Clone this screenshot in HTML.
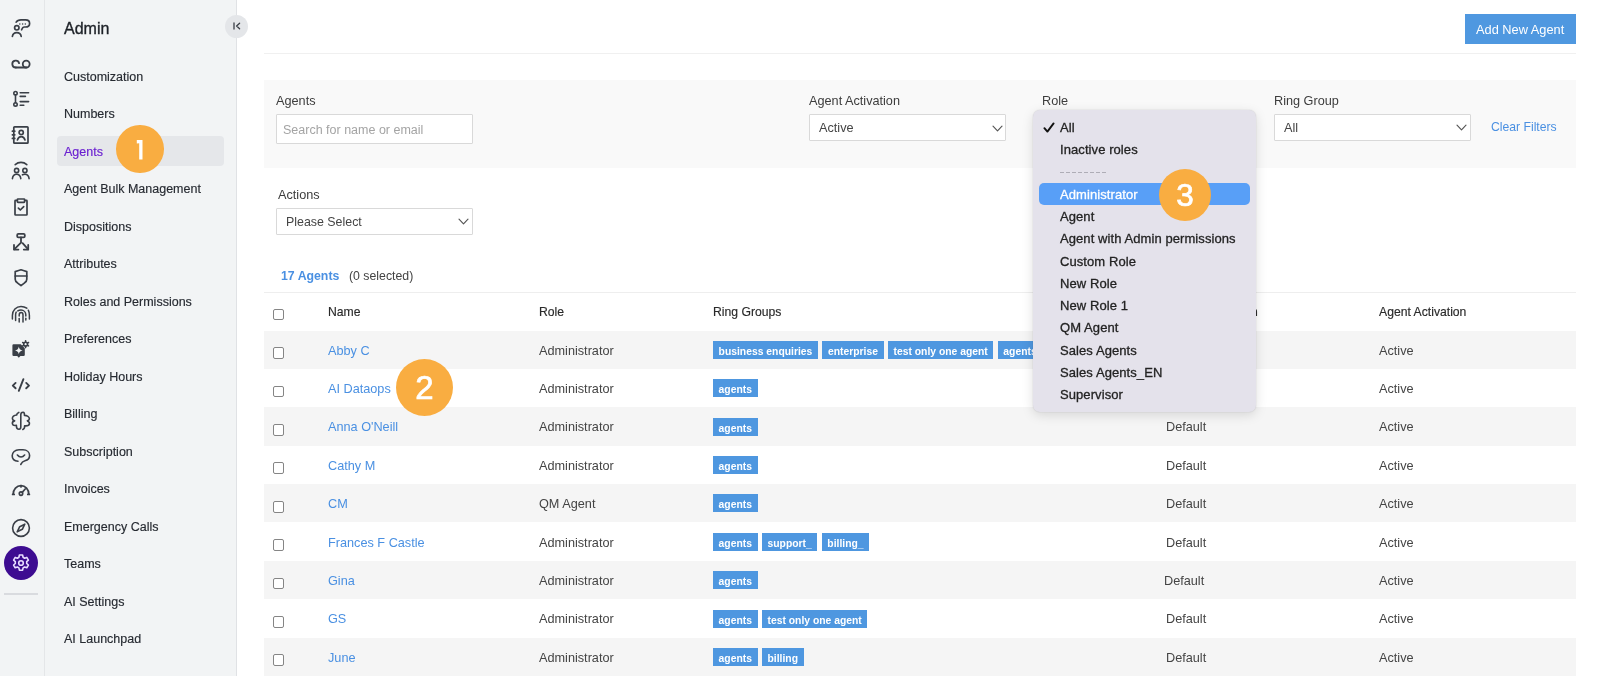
<!DOCTYPE html>
<html><head><meta charset="utf-8"><style>
*{box-sizing:border-box;margin:0;padding:0}
html,body{width:1600px;height:676px;overflow:hidden;background:#fff;font-family:"Liberation Sans",sans-serif}
.t{position:absolute;white-space:nowrap;will-change:transform}
.ic{position:absolute;overflow:visible}
#rail{position:absolute;left:0;top:0;width:45px;height:676px;background:#f2f4f5;border-right:1px solid #e4e6e8}
#side{position:absolute;left:45px;top:0;width:192px;height:676px;background:#f2f4f5;border-right:1px solid #e0e2e5}
#gearc{position:absolute;left:4px;top:546px;width:34.2px;height:34.2px;border-radius:50%;background:#3d0c91}
#railline{position:absolute;left:4px;top:593px;width:34px;height:2px;background:#d9dbdf}
#hl{position:absolute;left:57px;top:136px;width:167px;height:30px;border-radius:4px;background:#e5e7ea}
#coll{position:absolute;left:224.5px;top:14.5px;width:23px;height:23px;border-radius:50%;background:#e4e6e9}
#hdrline{position:absolute;left:264px;top:53px;width:1312px;height:1px;background:#f0f0f0}
#btn{position:absolute;left:1465px;top:14px;width:111px;height:30px;background:#4f98e0}
#panel{position:absolute;left:264px;top:80.4px;width:1312px;height:87.6px;background:#f9f9f9}
.inp{position:absolute;background:#fff;border:1px solid #d9d9d9;border-radius:1px}
#tline{position:absolute;left:264px;top:292px;width:1312px;height:1px;background:#eeeeee}
.row{position:absolute;left:264px;width:1312px;height:38.4px;background:#f5f5f5}
.cb{position:absolute;left:272.7px;width:11.7px;height:11.8px;border:1px solid #858585;border-radius:2px;background:#fff}
.tags{position:absolute;left:713px;height:17.8px;white-space:nowrap;font-size:0;will-change:transform}
.tags span{display:inline-block;height:17.8px;line-height:21px;overflow:hidden;padding:0 5.6px;margin-right:4.4px;background:#4e97e0;color:#fff;font-weight:700;font-size:10.35px;vertical-align:top}
#dd{position:absolute;left:1033px;top:110.3px;width:222.5px;height:302px;border-radius:7px;background:#e4e2eb;box-shadow:0 3px 12px rgba(0,0,0,0.13),0 0 1.5px rgba(0,0,0,0.18)}
#ddhl{position:absolute;left:1039px;top:182.9px;width:211px;height:22.6px;border-radius:5px;background:#589ff7}
#dashes{position:absolute;left:1060px;top:171.5px;width:46px;height:1.2px;background:repeating-linear-gradient(90deg,#aeadb6 0 4px,transparent 4px 6px)}
.num{position:absolute;border-radius:50%;background:#f9ad41;color:#fff;text-align:center;font-family:"Liberation Sans",sans-serif;-webkit-text-stroke:0.7px #fff;will-change:transform}
</style></head><body>
<div id="rail"></div>
<div id="side"></div>
<div id="gearc"></div>
<div id="railline"></div>
<svg class="ic" style="left:11.0px;top:17.5px" width="20" height="20" viewBox="0 0 20 20" fill="none" stroke="#3a3f47" stroke-width="1.7" stroke-linecap="round" stroke-linejoin="round"><circle cx="5.8" cy="9.8" r="2.2"/><path d="M1.4 18.4C1.8 15.8 3.4 14.6 5.8 14.6S9.8 15.8 10.2 18.4"/><path d="M5.2 4.2C6 2.8 7.6 1.9 10 1.9H14.6C17 1.9 18.6 3.4 18.6 5.4 18.6 7.6 16.8 9 14.4 9H13.4C12.4 9 11.4 9.6 10.6 11.8"/><circle cx="8.8" cy="5.9" r="0.75" fill="#3a3f47" stroke="none"/><circle cx="11.6" cy="5.9" r="0.75" fill="#3a3f47" stroke="none"/><circle cx="14.3" cy="5.9" r="0.75" fill="#3a3f47" stroke="none"/></svg>
<svg class="ic" style="left:11.0px;top:58.0px" width="20" height="12" viewBox="0 0 20 12" fill="none" stroke="#3a3f47" stroke-width="1.8" stroke-linecap="round" stroke-linejoin="round"><path d="M4.9 9.5A3.45 3.45 0 1 1 8.1 5.2"/><circle cx="15.2" cy="6.05" r="3.45"/><path d="M4.9 9.5h10.3"/></svg>
<svg class="ic" style="left:12.0px;top:90.0px" width="18" height="18" viewBox="0 0 18 18" fill="none" stroke="#3a3f47" stroke-width="1.6" stroke-linecap="round" stroke-linejoin="round"><circle cx="3.5" cy="3.2" r="1.7"/><circle cx="3.5" cy="14.4" r="1.7"/><path d="M3.5 4.9v7.8"/><path d="M8.2 2.8h8.4M8.2 6.4h5.2M8.2 11.6h8.4M8.2 15.2h3.6"/></svg>
<svg class="ic" style="left:11.0px;top:125.0px" width="20" height="20" viewBox="0 0 20 20" fill="none" stroke="#3a3f47" stroke-width="1.7" stroke-linecap="round" stroke-linejoin="round"><rect x="2.8" y="1.8" width="14.2" height="16.4" rx="0.8"/><circle cx="10.2" cy="7.4" r="2.1"/><path d="M6.4 15c0.7-2.2 2.1-3.3 3.8-3.3s3.1 1.1 3.8 3.3"/><path d="M1.4 6.2h2.4M1.4 9.8h2.4M1.4 13.4h2.4"/></svg>
<svg class="ic" style="left:11.0px;top:161.0px" width="20" height="20" viewBox="0 0 20 20" fill="none" stroke="#3a3f47" stroke-width="1.6" stroke-linecap="round" stroke-linejoin="round"><circle cx="5.6" cy="9.5" r="2.1"/><circle cx="13.9" cy="9.5" r="2.1"/><path d="M1.4 17.6c0.4-2.8 2.1-4.3 4.2-4.3s3.8 1.5 4.2 4.3"/><path d="M11.4 13.8c0.7-0.3 1.5-0.5 2.5-0.5 2.1 0 3.8 1.5 4.2 4.3"/><path d="M4.2 3.6c1.7-1.5 3.6-2.2 5.8-2.2s4.1 0.7 5.8 2.2"/></svg>
<svg class="ic" style="left:11.0px;top:196.5px" width="20" height="20" viewBox="0 0 20 20" fill="none" stroke="#3a3f47" stroke-width="1.7" stroke-linecap="round" stroke-linejoin="round"><rect x="4" y="3.4" width="12" height="14.6" rx="0.6"/><rect x="6.4" y="2" width="7.2" height="3.4" rx="0.6" fill="#f2f4f5"/><path d="M7.4 11.2l1.9 1.8 3.4-3.4"/></svg>
<svg class="ic" style="left:11.0px;top:232.0px" width="20" height="20" viewBox="0 0 20 20" fill="none" stroke="#3a3f47" stroke-width="1.8" stroke-linecap="round" stroke-linejoin="round"><rect x="6.2" y="1.8" width="7.6" height="3.6" rx="1.2"/><path d="M10 5.4v5.2L3.2 17.4M11.6 11.2l5.6 6.2"/><path d="M3 13v4.6h4.4M17.2 13v4.6h-4.4"/></svg>
<svg class="ic" style="left:11.0px;top:268.0px" width="20" height="20" viewBox="0 0 20 20" fill="none" stroke="#3a3f47" stroke-width="1.7" stroke-linecap="round" stroke-linejoin="round"><path d="M4.2 3.6c2-0.6 4-1.2 5.8-1.8 1.8 0.6 3.8 1.2 5.8 1.8v7.6c0 1.4-0.8 2.6-2.2 3.6L10 17.6l-3.6-2.8c-1.4-1-2.2-2.2-2.2-3.6z"/><path d="M4.2 8h11.6"/></svg>
<svg class="ic" style="left:11.0px;top:303.5px" width="20" height="20" viewBox="0 0 20 20" fill="none" stroke="#3a3f47" stroke-width="1.5" stroke-linecap="round" stroke-linejoin="round"><path d="M1.4 15V11.4C1.4 6.4 5.2 2.4 10 2.4 12.4 2.4 14.4 3.2 15.8 4.2"/><path d="M17.3 6.2C18 7.6 18.4 9.4 18.4 11.4V15"/><path d="M4.6 16.6V10.8C4.6 9.8 4.8 8.9 5.2 8.1"/><path d="M6.8 6.9C7.7 6.3 8.8 6 10 6 12.8 6 14.8 8.2 14.8 10.8V12"/><path d="M14.8 14.2V16"/><path d="M8.2 12V11C8.2 9.6 9 8.6 10.2 8.6S12 9.6 12 11V18"/><path d="M8.2 14.6V18"/></svg>
<svg class="ic" style="left:11.0px;top:339.0px" width="20" height="20" viewBox="0 0 20 20" fill="none" stroke="#3a3f47" stroke-width="1.2" stroke-linecap="round" stroke-linejoin="round"><path d="M2.6 5.2H9.8L13.8 9.2V15.8a1.2 1.2 0 0 1-1.2 1.2H9.4L7.8 18.8 6.2 17H2.6a1.2 1.2 0 0 1-1.2-1.2V6.4a1.2 1.2 0 0 1 1.2-1.2z" fill="#3a3f47" stroke="none"/><path d="M7.8 7.6Q8.2 11 11.6 11.4 8.2 11.8 7.8 15.2 7.4 11.8 4 11.4 7.4 11 7.8 7.6z" fill="#f2f4f5" stroke="none"/><circle cx="14.6" cy="5.2" r="1.9" stroke-width="1.5"/><path d="M14.6 1.8v1.2M14.6 7.4v1.2M11.7 3.5l1 0.6M16.5 6.3l1 0.6M11.7 6.9l1-0.6M16.5 4.1l1-0.6" stroke-width="1.6"/></svg>
<svg class="ic" style="left:11.0px;top:376.5px" width="20" height="16" viewBox="0 0 20 16" fill="none" stroke="#3a3f47" stroke-width="1.9" stroke-linecap="round" stroke-linejoin="round"><path d="M4.6 5.9L1.8 8.6l2.8 2.7M15.2 5.9l2.8 2.7-2.8 2.7M12.4 2.2L7.8 13.8"/></svg>
<svg class="ic" style="left:11.0px;top:411.0px" width="20" height="20" viewBox="0 0 20 20" fill="none" stroke="#3a3f47" stroke-width="1.6" stroke-linecap="round" stroke-linejoin="round"><path d="M7.8 1.4C6.6 1.8 5.8 2.8 5.6 4 3 4.2 1.2 5.8 1.4 7.6 1.5 8.8 2.4 9.6 3.6 9.9 2 10.3 1.2 11.6 1.4 12.8 1.7 14.2 3.4 14.8 5.4 14.4 5.4 16.6 6.6 18.2 8 18.2 9 18.2 9.8 17.4 9.8 16V3.8C9.8 2.2 10.8 1.2 12 1.2 13.2 1.2 13.6 2.6 13.4 4.4 16 4.4 18.4 5.8 18.4 7.8 18.4 8.8 17.6 9.6 16.4 9.9 17.8 10.4 18.6 11.6 18.4 12.8 18.2 14.4 16.2 15 13.6 14.8 13.8 16.4 13.2 17.8 11.8 18.4"/></svg>
<svg class="ic" style="left:11.0px;top:448.0px" width="20" height="18" viewBox="0 0 20 18" fill="none" stroke="#3a3f47" stroke-width="1.6" stroke-linecap="round" stroke-linejoin="round"><path d="M7 13.2C3.6 13 1.2 11 1.2 7.8 1.2 4.4 4 1.8 8 1.8H12C16 1.8 18.6 4.4 18.6 7.6 18.6 10.4 16.8 12.2 14 12.8 12.2 13.2 10.6 14.6 9.8 16.4"/><path d="M6.4 7C8.4 9.6 11.6 9.6 13.6 7"/></svg>
<svg class="ic" style="left:11.0px;top:480.8px" width="20" height="16" viewBox="0 0 20 16" fill="none" stroke="#3a3f47" stroke-width="1.7" stroke-linecap="round" stroke-linejoin="round"><path d="M2.2 13.2c0-4.8 3.4-8.6 7.8-8.6s7.8 3.8 7.8 8.6"/><path d="M1.6 13.4h1.6M16.8 13.4h1.6M10 4.6v1.4"/><circle cx="10" cy="12.6" r="1.7"/><path d="M11.2 11.4l3-3.4"/></svg>
<svg class="ic" style="left:11.0px;top:518.0px" width="20" height="20" viewBox="0 0 20 20" fill="none" stroke="#3a3f47" stroke-width="1.6" stroke-linecap="round" stroke-linejoin="round"><circle cx="10" cy="10" r="8.4"/><path d="M13.8 6.2L11.3 11.3 6.2 13.8 8.7 8.7z" stroke-width="1.6"/></svg>
<svg class="ic" style="left:11px;top:553.2px" width="20" height="20" viewBox="0 0 20 20" fill="none" stroke="#e8ddff" stroke-width="1.6" stroke-linejoin="round"><path d="M8.4 2h3.2l0.5 2.3 1.5 0.9 2.2-0.8 1.6 2.8-1.7 1.5v1.8l1.7 1.5-1.6 2.8-2.2-0.8-1.5 0.9-0.5 2.3H8.4l-0.5-2.3-1.5-0.9-2.2 0.8-1.6-2.8 1.7-1.5V8.7L2.6 7.2l1.6-2.8 2.2 0.8 1.5-0.9z"/><circle cx="10" cy="10" r="2.3"/></svg>

<div id="hl"></div>
<div class="t" style="left:64px;top:20.86px;font-size:16px;line-height:16px;color:#1d2127;font-weight:400;-webkit-text-stroke:0.35px #1d2127;">Admin</div>

<div class="t" style="left:64px;top:70.72px;font-size:12.5px;line-height:12.5px;color:#262a31;font-weight:400;-webkit-text-stroke:0.15px #262a31;">Customization</div>
<div class="t" style="left:64px;top:108.22px;font-size:12.5px;line-height:12.5px;color:#262a31;font-weight:400;-webkit-text-stroke:0.15px #262a31;">Numbers</div>
<div class="t" style="left:64px;top:145.72px;font-size:12.5px;line-height:12.5px;color:#6a1fd0;font-weight:400;-webkit-text-stroke:0.15px #6a1fd0;">Agents</div>
<div class="t" style="left:64px;top:183.22px;font-size:12.5px;line-height:12.5px;color:#262a31;font-weight:400;-webkit-text-stroke:0.15px #262a31;">Agent Bulk Management</div>
<div class="t" style="left:64px;top:220.72px;font-size:12.5px;line-height:12.5px;color:#262a31;font-weight:400;-webkit-text-stroke:0.15px #262a31;">Dispositions</div>
<div class="t" style="left:64px;top:258.22px;font-size:12.5px;line-height:12.5px;color:#262a31;font-weight:400;-webkit-text-stroke:0.15px #262a31;">Attributes</div>
<div class="t" style="left:64px;top:295.72px;font-size:12.5px;line-height:12.5px;color:#262a31;font-weight:400;-webkit-text-stroke:0.15px #262a31;">Roles and Permissions</div>
<div class="t" style="left:64px;top:333.22px;font-size:12.5px;line-height:12.5px;color:#262a31;font-weight:400;-webkit-text-stroke:0.15px #262a31;">Preferences</div>
<div class="t" style="left:64px;top:370.72px;font-size:12.5px;line-height:12.5px;color:#262a31;font-weight:400;-webkit-text-stroke:0.15px #262a31;">Holiday Hours</div>
<div class="t" style="left:64px;top:408.22px;font-size:12.5px;line-height:12.5px;color:#262a31;font-weight:400;-webkit-text-stroke:0.15px #262a31;">Billing</div>
<div class="t" style="left:64px;top:445.72px;font-size:12.5px;line-height:12.5px;color:#262a31;font-weight:400;-webkit-text-stroke:0.15px #262a31;">Subscription</div>
<div class="t" style="left:64px;top:483.22px;font-size:12.5px;line-height:12.5px;color:#262a31;font-weight:400;-webkit-text-stroke:0.15px #262a31;">Invoices</div>
<div class="t" style="left:64px;top:520.72px;font-size:12.5px;line-height:12.5px;color:#262a31;font-weight:400;-webkit-text-stroke:0.15px #262a31;">Emergency Calls</div>
<div class="t" style="left:64px;top:558.22px;font-size:12.5px;line-height:12.5px;color:#262a31;font-weight:400;-webkit-text-stroke:0.15px #262a31;">Teams</div>
<div class="t" style="left:64px;top:595.72px;font-size:12.5px;line-height:12.5px;color:#262a31;font-weight:400;-webkit-text-stroke:0.15px #262a31;">AI Settings</div>
<div class="t" style="left:64px;top:633.22px;font-size:12.5px;line-height:12.5px;color:#262a31;font-weight:400;-webkit-text-stroke:0.15px #262a31;">AI Launchpad</div>

<div id="coll"></div>
<svg class="ic" style="left:231.5px;top:21px" width="10" height="10" viewBox="0 0 10 10" fill="none" stroke="#3a3f47" stroke-width="1.3" stroke-linecap="round" stroke-linejoin="round"><path d="M2 2v6M7.6 2.2L4.6 5l3 2.8"/></svg>
<div id="hdrline"></div>
<div id="btn"></div>
<div class="t" style="left:1476px;top:24.16px;font-size:12.8px;line-height:12.8px;color:#fff;font-weight:400;">Add New Agent</div>

<div id="panel"></div>
<div class="inp" style="left:276px;top:114px;width:197.4px;height:29.6px"></div>
<div class="inp" style="left:809px;top:114px;width:197px;height:26.5px"></div>
<div class="inp" style="left:1274px;top:114px;width:197px;height:26.5px"></div>
<div class="inp" style="left:276px;top:207.5px;width:197.4px;height:27px"></div>
<svg class="ic" style="left:991.5px;top:124.5px" width="11" height="7" viewBox="0 0 11 7" fill="none" stroke="#555" stroke-width="1.15" stroke-linecap="round" stroke-linejoin="round"><path d="M1 1.2l4.5 4.6 4.5-4.6"/></svg>
<svg class="ic" style="left:1456px;top:124px" width="11" height="7" viewBox="0 0 11 7" fill="none" stroke="#555" stroke-width="1.15" stroke-linecap="round" stroke-linejoin="round"><path d="M1 1.2l4.5 4.6 4.5-4.6"/></svg>
<svg class="ic" style="left:457.5px;top:217.5px" width="11" height="7" viewBox="0 0 11 7" fill="none" stroke="#555" stroke-width="1.15" stroke-linecap="round" stroke-linejoin="round"><path d="M1 1.2l4.5 4.6 4.5-4.6"/></svg>

<div id="tline"></div>
<div class="row" style="top:330.5px"></div>
<div class="row" style="top:407.3px"></div>
<div class="row" style="top:484.1px"></div>
<div class="row" style="top:560.9px"></div>
<div class="row" style="top:637.7px"></div>

<div class="t" style="left:275.8px;top:95.15px;font-size:12.7px;line-height:12.7px;color:#3d3d3d;font-weight:400;">Agents</div>
<div class="t" style="left:809.3px;top:94.85px;font-size:12.7px;line-height:12.7px;color:#3d3d3d;font-weight:400;">Agent Activation</div>
<div class="t" style="left:1042px;top:94.95px;font-size:12.7px;line-height:12.7px;color:#3d3d3d;font-weight:400;">Role</div>
<div class="t" style="left:1274.4px;top:94.95px;font-size:12.7px;line-height:12.7px;color:#3d3d3d;font-weight:400;">Ring Group</div>
<div class="t" style="left:1490.8px;top:121.07px;font-size:12.2px;line-height:12.2px;color:#4a90e2;font-weight:400;">Clear Filters</div>
<div class="t" style="left:278.2px;top:188.65px;font-size:12.7px;line-height:12.7px;color:#3d3d3d;font-weight:400;">Actions</div>
<div class="t" style="left:282.6px;top:123.52px;font-size:12.5px;line-height:12.5px;color:#a4a4a4;font-weight:400;">Search for name or email</div>
<div class="t" style="left:819px;top:122.35px;font-size:12.7px;line-height:12.7px;color:#444;font-weight:400;">Active</div>
<div class="t" style="left:1284px;top:122.15px;font-size:12.7px;line-height:12.7px;color:#444;font-weight:400;">All</div>
<div class="t" style="left:286.3px;top:216.40px;font-size:12.4px;line-height:12.4px;color:#444;font-weight:400;">Please Select</div>
<div class="t" style="left:280.5px;top:270.39px;font-size:12.3px;line-height:12.3px;color:#4a90e2;font-weight:700;">17 Agents</div>
<div class="t" style="left:348.5px;top:270.39px;font-size:12.3px;line-height:12.3px;color:#444;font-weight:400;">(0 selected)</div>
<div class="t" style="left:328.3px;top:305.87px;font-size:12.2px;line-height:12.2px;color:#2a2a2a;font-weight:400;-webkit-text-stroke:0.15px #2a2a2a;">Name</div>
<div class="t" style="left:538.5px;top:305.87px;font-size:12.2px;line-height:12.2px;color:#2a2a2a;font-weight:400;-webkit-text-stroke:0.15px #2a2a2a;">Role</div>
<div class="t" style="left:713px;top:305.87px;font-size:12.2px;line-height:12.2px;color:#2a2a2a;font-weight:400;-webkit-text-stroke:0.15px #2a2a2a;">Ring Groups</div>
<div class="t" style="left:1170.8999999999999px;top:305.87px;font-size:12.2px;line-height:12.2px;color:#2a2a2a;font-weight:400;-webkit-text-stroke:0.15px #2a2a2a;">Caller ID Option</div>
<div class="t" style="left:1379.2px;top:305.87px;font-size:12.2px;line-height:12.2px;color:#2a2a2a;font-weight:400;-webkit-text-stroke:0.15px #2a2a2a;">Agent Activation</div>
<div class="cb" style="top:347.2px"></div>
<div class="t" style="left:328.3px;top:344.55px;font-size:12.7px;line-height:12.7px;color:#4a90e2;font-weight:400;">Abby C</div>
<div class="t" style="left:538.5px;top:344.55px;font-size:12.7px;line-height:12.7px;color:#444;font-weight:400;">Administrator</div>
<div class="tags" style="top:340.8px"><span>business enquiries</span><span>enterprise</span><span>test only one agent</span><span>agents</span><span>support_</span></div>
<div class="t" style="left:1166px;top:344.55px;font-size:12.7px;line-height:12.7px;color:#444;font-weight:400;">Default</div>
<div class="t" style="left:1379.2px;top:344.55px;font-size:12.7px;line-height:12.7px;color:#444;font-weight:400;">Active</div>
<div class="cb" style="top:385.6px"></div>
<div class="t" style="left:328.3px;top:382.95px;font-size:12.7px;line-height:12.7px;color:#4a90e2;font-weight:400;">AI Dataops</div>
<div class="t" style="left:538.5px;top:382.95px;font-size:12.7px;line-height:12.7px;color:#444;font-weight:400;">Administrator</div>
<div class="tags" style="top:379.2px"><span>agents</span></div>
<div class="t" style="left:1166px;top:382.95px;font-size:12.7px;line-height:12.7px;color:#444;font-weight:400;">Default</div>
<div class="t" style="left:1379.2px;top:382.95px;font-size:12.7px;line-height:12.7px;color:#444;font-weight:400;">Active</div>
<div class="cb" style="top:424.0px"></div>
<div class="t" style="left:328.3px;top:421.35px;font-size:12.7px;line-height:12.7px;color:#4a90e2;font-weight:400;">Anna O'Neill</div>
<div class="t" style="left:538.5px;top:421.35px;font-size:12.7px;line-height:12.7px;color:#444;font-weight:400;">Administrator</div>
<div class="tags" style="top:417.6px"><span>agents</span></div>
<div class="t" style="left:1166px;top:421.35px;font-size:12.7px;line-height:12.7px;color:#444;font-weight:400;">Default</div>
<div class="t" style="left:1379.2px;top:421.35px;font-size:12.7px;line-height:12.7px;color:#444;font-weight:400;">Active</div>
<div class="cb" style="top:462.4px"></div>
<div class="t" style="left:328.3px;top:459.75px;font-size:12.7px;line-height:12.7px;color:#4a90e2;font-weight:400;">Cathy M</div>
<div class="t" style="left:538.5px;top:459.75px;font-size:12.7px;line-height:12.7px;color:#444;font-weight:400;">Administrator</div>
<div class="tags" style="top:456.0px"><span>agents</span></div>
<div class="t" style="left:1166px;top:459.75px;font-size:12.7px;line-height:12.7px;color:#444;font-weight:400;">Default</div>
<div class="t" style="left:1379.2px;top:459.75px;font-size:12.7px;line-height:12.7px;color:#444;font-weight:400;">Active</div>
<div class="cb" style="top:500.8px"></div>
<div class="t" style="left:328.3px;top:498.15px;font-size:12.7px;line-height:12.7px;color:#4a90e2;font-weight:400;">CM</div>
<div class="t" style="left:538.5px;top:498.15px;font-size:12.7px;line-height:12.7px;color:#444;font-weight:400;">QM Agent</div>
<div class="tags" style="top:494.4px"><span>agents</span></div>
<div class="t" style="left:1166px;top:498.15px;font-size:12.7px;line-height:12.7px;color:#444;font-weight:400;">Default</div>
<div class="t" style="left:1379.2px;top:498.15px;font-size:12.7px;line-height:12.7px;color:#444;font-weight:400;">Active</div>
<div class="cb" style="top:539.2px"></div>
<div class="t" style="left:328.3px;top:536.55px;font-size:12.7px;line-height:12.7px;color:#4a90e2;font-weight:400;">Frances F Castle</div>
<div class="t" style="left:538.5px;top:536.55px;font-size:12.7px;line-height:12.7px;color:#444;font-weight:400;">Administrator</div>
<div class="tags" style="top:532.8px"><span>agents</span><span>support_</span><span>billing_</span></div>
<div class="t" style="left:1166px;top:536.55px;font-size:12.7px;line-height:12.7px;color:#444;font-weight:400;">Default</div>
<div class="t" style="left:1379.2px;top:536.55px;font-size:12.7px;line-height:12.7px;color:#444;font-weight:400;">Active</div>
<div class="cb" style="top:577.6px"></div>
<div class="t" style="left:328.3px;top:574.95px;font-size:12.7px;line-height:12.7px;color:#4a90e2;font-weight:400;">Gina</div>
<div class="t" style="left:538.5px;top:574.95px;font-size:12.7px;line-height:12.7px;color:#444;font-weight:400;">Administrator</div>
<div class="tags" style="top:571.2px"><span>agents</span></div>
<div class="t" style="left:1164px;top:574.95px;font-size:12.7px;line-height:12.7px;color:#444;font-weight:400;">Default</div>
<div class="t" style="left:1379.2px;top:574.95px;font-size:12.7px;line-height:12.7px;color:#444;font-weight:400;">Active</div>
<div class="cb" style="top:616.0px"></div>
<div class="t" style="left:328.3px;top:613.35px;font-size:12.7px;line-height:12.7px;color:#4a90e2;font-weight:400;">GS</div>
<div class="t" style="left:538.5px;top:613.35px;font-size:12.7px;line-height:12.7px;color:#444;font-weight:400;">Administrator</div>
<div class="tags" style="top:609.6px"><span>agents</span><span>test only one agent</span></div>
<div class="t" style="left:1166px;top:613.35px;font-size:12.7px;line-height:12.7px;color:#444;font-weight:400;">Default</div>
<div class="t" style="left:1379.2px;top:613.35px;font-size:12.7px;line-height:12.7px;color:#444;font-weight:400;">Active</div>
<div class="cb" style="top:654.4px"></div>
<div class="t" style="left:328.3px;top:651.75px;font-size:12.7px;line-height:12.7px;color:#4a90e2;font-weight:400;">June</div>
<div class="t" style="left:538.5px;top:651.75px;font-size:12.7px;line-height:12.7px;color:#444;font-weight:400;">Administrator</div>
<div class="tags" style="top:648.0px"><span>agents</span><span>billing</span></div>
<div class="t" style="left:1166px;top:651.75px;font-size:12.7px;line-height:12.7px;color:#444;font-weight:400;">Default</div>
<div class="t" style="left:1379.2px;top:651.75px;font-size:12.7px;line-height:12.7px;color:#444;font-weight:400;">Active</div>
<div class="cb" style="top:308.5px"></div>

<div id="dd"></div>
<div id="ddhl"></div>
<div class="t" style="left:1060.2px;top:120.70px;font-size:13px;line-height:13px;color:#232323;font-weight:400;letter-spacing:0.08px;-webkit-text-stroke:0.3px #232323;">All</div>
<div class="t" style="left:1060.2px;top:143.00px;font-size:13px;line-height:13px;color:#232323;font-weight:400;letter-spacing:0.08px;-webkit-text-stroke:0.3px #232323;">Inactive roles</div>
<div id="dashes"></div>
<div class="t" style="left:1060.2px;top:187.60px;font-size:13px;line-height:13px;color:#fff;font-weight:400;letter-spacing:0.08px;-webkit-text-stroke:0.3px #fff;">Administrator</div>
<div class="t" style="left:1060.2px;top:209.90px;font-size:13px;line-height:13px;color:#232323;font-weight:400;letter-spacing:0.08px;-webkit-text-stroke:0.3px #232323;">Agent</div>
<div class="t" style="left:1060.2px;top:232.20px;font-size:13px;line-height:13px;color:#232323;font-weight:400;letter-spacing:0.08px;-webkit-text-stroke:0.3px #232323;">Agent with Admin permissions</div>
<div class="t" style="left:1060.2px;top:254.50px;font-size:13px;line-height:13px;color:#232323;font-weight:400;letter-spacing:0.08px;-webkit-text-stroke:0.3px #232323;">Custom Role</div>
<div class="t" style="left:1060.2px;top:276.80px;font-size:13px;line-height:13px;color:#232323;font-weight:400;letter-spacing:0.08px;-webkit-text-stroke:0.3px #232323;">New Role</div>
<div class="t" style="left:1060.2px;top:299.10px;font-size:13px;line-height:13px;color:#232323;font-weight:400;letter-spacing:0.08px;-webkit-text-stroke:0.3px #232323;">New Role 1</div>
<div class="t" style="left:1060.2px;top:321.40px;font-size:13px;line-height:13px;color:#232323;font-weight:400;letter-spacing:0.08px;-webkit-text-stroke:0.3px #232323;">QM Agent</div>
<div class="t" style="left:1060.2px;top:343.70px;font-size:13px;line-height:13px;color:#232323;font-weight:400;letter-spacing:0.08px;-webkit-text-stroke:0.3px #232323;">Sales Agents</div>
<div class="t" style="left:1060.2px;top:366.00px;font-size:13px;line-height:13px;color:#232323;font-weight:400;letter-spacing:0.08px;-webkit-text-stroke:0.3px #232323;">Sales Agents_EN</div>
<div class="t" style="left:1060.2px;top:388.30px;font-size:13px;line-height:13px;color:#232323;font-weight:400;letter-spacing:0.08px;-webkit-text-stroke:0.3px #232323;">Supervisor</div>
<svg class="ic" style="left:1043px;top:122px" width="12" height="11" viewBox="0 0 12 11" fill="none" stroke="#111" stroke-width="1.9" stroke-linecap="round" stroke-linejoin="round"><path d="M1.4 6.2l3 3.4L10.6 1.4"/></svg>

<div class="num" style="left:116.25px;top:125.05000000000001px;width:47.5px;height:47.5px;line-height:47.5px;font-size:26px"></div>

<svg class="ic" style="left:130px;top:138px" width="20" height="22" viewBox="0 0 20 22"><path d="M6.8 2H12.5V21.4H9.2V5.2L6.8 5.4z" fill="#fff"/></svg>
<div class="num" style="left:396.0px;top:358.5px;width:57px;height:57px;line-height:57px;font-size:33px">2</div>

<div class="num" style="left:1159.2px;top:169.0px;width:52px;height:52px;line-height:52px;font-size:31.5px">3</div>

</body></html>
